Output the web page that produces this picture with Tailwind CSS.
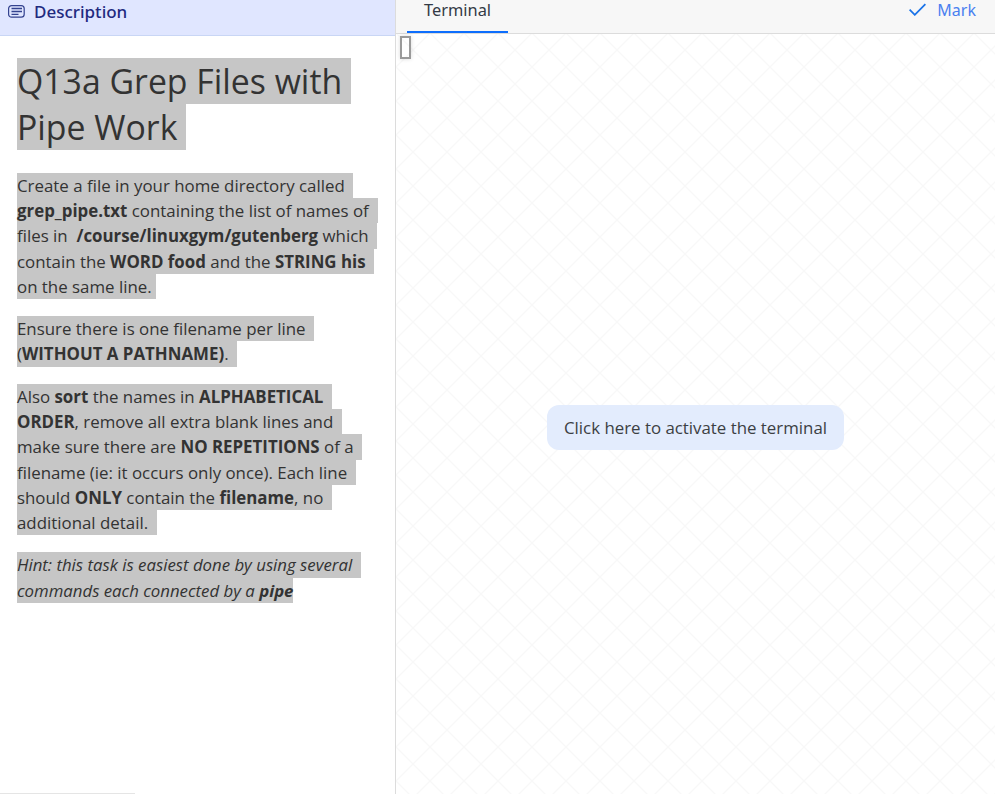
<!DOCTYPE html>
<html>
<head>
<meta charset="utf-8">
<script src="https://cdn.jsdelivr.net/npm/@tailwindcss/browser@4"></script>
</head>
<body class="w-[995px] h-[794px] overflow-hidden bg-white font-['Open_Sans',sans-serif] text-[#333a45]">
<div class="flex h-[794px] w-[995px]">
  <section class="relative w-[396px] h-full border-r border-[#dcdcdc] flex flex-col">
    <header class="h-[36px] shrink-0 bg-[#e0e6ff] border-b border-[#c9d6f5] flex items-start pl-[8px] gap-[9px]">
      <svg class="mt-[5px]" width="17" height="13" viewBox="0 0 17 13" fill="none" stroke="#33428f"><rect x="0.6" y="0.6" width="15.6" height="11.6" rx="3" stroke-width="1.2"/><path d="M3.5 3.5H14M3.5 6.5H14M3.5 9.3H10.5" stroke-width="1.3"/></svg>
      <span class="font-['Noto_Sans',sans-serif] font-medium text-[17px] leading-[24px] text-[#1f2a80]">Description</span>
    </header>
    <div class="pl-[17px] pt-[22px]">
      <h1 class="text-[33.8px] leading-[46px] font-normal text-[#333]">
        <div class="w-fit bg-[#c6c6c6] whitespace-pre">Q13a Grep Files with </div>
        <div class="w-fit bg-[#c6c6c6] whitespace-pre">Pipe Work </div>
      </h1>
      <div class="mt-[23px] text-[16.88px] leading-[25.2px] text-[#333]">
        <p class="mb-[17.25px]">
          <span class="block w-fit bg-[#c6c6c6] whitespace-pre">Create a file in your home directory called  </span>
          <span class="block w-fit bg-[#c6c6c6] whitespace-pre"><b>grep_pipe.txt</b> containing the list of names of  </span>
          <span class="block w-fit bg-[#c6c6c6] whitespace-pre">files in  <b>/course/linuxgym/gutenberg</b> which  </span>
          <span class="block w-fit bg-[#c6c6c6] whitespace-pre">contain the <b>WORD food</b> and the <b>STRING his</b>  </span>
          <span class="block w-fit bg-[#c6c6c6] whitespace-pre">on the same line. </span>
        </p>
        <p class="mb-[17.25px]">
          <span class="block w-fit bg-[#c6c6c6] whitespace-pre">Ensure there is one filename per line  </span>
          <span class="block w-fit bg-[#c6c6c6] whitespace-pre">(<b>WITHOUT A PATHNAME)</b>.  </span>
        </p>
        <p class="mb-[17.25px]">
          <span class="block w-fit bg-[#c6c6c6] whitespace-pre">Also <b>sort</b> the names in <b>ALPHABETICAL</b>  </span>
          <span class="block w-fit bg-[#c6c6c6] whitespace-pre"><b>ORDER</b>, remove all extra blank lines and  </span>
          <span class="block w-fit bg-[#c6c6c6] whitespace-pre">make sure there are <b>NO REPETITIONS</b> of a  </span>
          <span class="block w-fit bg-[#c6c6c6] whitespace-pre">filename (ie: it occurs only once). Each line  </span>
          <span class="block w-fit bg-[#c6c6c6] whitespace-pre">should <b>ONLY</b> contain the <b>filename</b>, no  </span>
          <span class="block w-fit bg-[#c6c6c6] whitespace-pre">additional detail.  </span>
        </p>
        <p class="italic text-[16.8px]">
          <span class="block w-fit bg-[#c6c6c6] whitespace-pre">Hint: this task is easiest done by using several  </span>
          <span class="block w-fit bg-[#c6c6c6] whitespace-pre">commands each connected by a <b>pipe</b></span>
        </p>
      </div>
    </div>
    <div class="absolute left-0 bottom-0 w-[135px] h-px bg-[#e5e5e5]"></div>
  </section>
  <section class="flex-1 flex flex-col min-w-0">
    <header class="h-[34px] shrink-0 bg-[#f7f7f7] border-b border-[#dcdcdc] flex items-stretch justify-between font-['Noto_Sans',sans-serif]">
      <div class="ml-[11px] w-[101px] h-[33px] border-b-2 border-[#0d6efd] pl-[17px] text-[16.4px] leading-[20px] text-[#333a45]">Terminal</div>
      <div class="flex items-start gap-[11px] pr-[19px] text-[16px] leading-[21px] text-[#4a80f0]">
        <svg class="mt-[3px]" width="17" height="13" viewBox="0 0 17 13" fill="none" stroke="#1a73e8" stroke-width="1.8"><path d="M0.6 6.6L5.8 11.8L16.4 1.2"/></svg>
        <span>Mark</span>
      </div>
    </header>
    <div class="relative flex-1 flex items-center justify-center">
      <svg class="absolute inset-0 w-full h-full" xmlns="http://www.w3.org/2000/svg">
        <defs><pattern id="lattice" x="0" y="-1" width="34" height="34" patternUnits="userSpaceOnUse"><path d="M0 0L34 34M34 0L0 34" stroke="#f8f8f8" stroke-width="1.3" fill="none"/></pattern></defs>
        <rect width="100%" height="100%" fill="url(#lattice)"/>
      </svg>
      <div class="absolute left-[4px] top-[2px] w-[11px] h-[23px] border-2 border-[#9a9a9a] shadow-[0_0_4px_rgba(0,0,0,0.15)]"></div>
      <button class="relative mt-[27px] h-[45px] w-[297px] rounded-[12px] bg-[#e3ecfd] text-[16.85px] text-[#3c4043]">Click here to activate the terminal</button>
    </div>
  </section>
</div>
</body>
</html>
